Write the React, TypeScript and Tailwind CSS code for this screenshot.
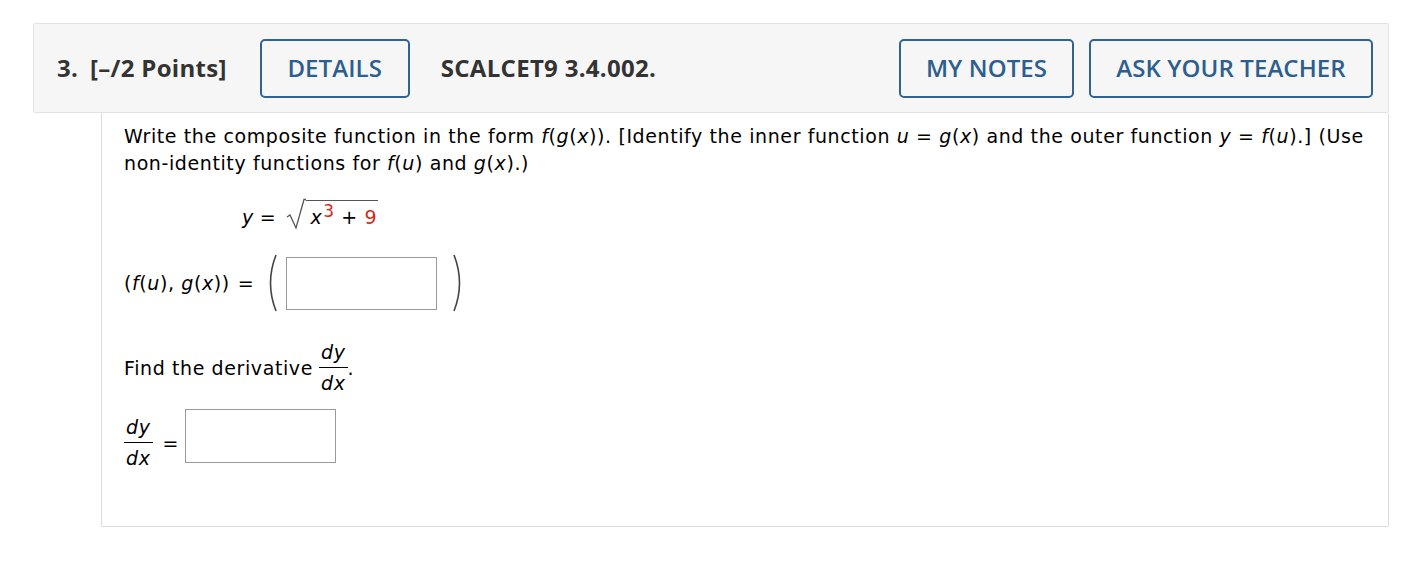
import React from 'react'

const body = { fontFamily: '"DejaVu Sans", Verdana, sans-serif' }
const head = { fontFamily: '"Open Sans", "Liberation Sans", sans-serif' }

function V({ children }: { children: React.ReactNode }) {
  return <i className="italic">{children}</i>
}

function Frac({ top, bottom }: { top: React.ReactNode; bottom: React.ReactNode }) {
  return (
    <span className="inline-flex flex-col items-center align-middle leading-[27px]">
      <span className="px-[2px] pb-[1px]">{top}</span>
      <span className="border-t-[1.5px] border-black w-full text-center px-[2px] pt-[2px]">{bottom}</span>
    </span>
  )
}

function HeadButton({ label, width }: { label: string; width: string }) {
  return (
    <button
      className={`h-[59px] ${width} rounded-[5px] border-2 border-[#2f6394] text-[#2c5e8f] text-[24px] font-semibold tracking-[0.1px] bg-transparent`}
      style={head}
    >
      {label}
    </button>
  )
}

export default function App() {
  return (
    <div className="w-[1408px] h-[572px] bg-white">
      <div className="pt-[23px] pl-[33px] pr-[19px]">
        <div className="flex items-center h-[90px] bg-[#f6f6f6] border border-[#e2e2e2] rounded-[2px] pl-[23px] pr-[15px]" style={head}>
          <span className="text-[24px] font-bold text-[#333] tracking-[0.2px]">3.</span>
          <span className="ml-[12px] text-[24px] font-bold text-[#333] tracking-[0.3px]">[–/2 Points]</span>
          <div className="ml-[33px]">
            <HeadButton label="DETAILS" width="w-[150px]" />
          </div>
          <span className="ml-[31px] text-[24px] font-bold text-[#333] tracking-[0.3px]">SCALCET9 3.4.002.</span>
          <div className="ml-auto flex gap-[15px]">
            <HeadButton label="MY NOTES" width="w-[175px]" />
            <HeadButton label="ASK YOUR TEACHER" width="w-[284px]" />
          </div>
        </div>
        <div className="ml-[68px] h-[414px] border border-t-0 border-[#dcdcdc] rounded-b-[2px] pl-[22px] pr-[10px] pt-[10px] text-[19px] tracking-[0.6px] text-black" style={body}>
          <p className="leading-[27px]">
            <span className="whitespace-nowrap">
              Write the composite function in the form <V>f</V>(<V>g</V>(<V>x</V>)). [Identify the inner function <V>u</V> = <V>g</V>(<V>x</V>) and the outer function <V>y</V> = <V>f</V>(<V>u</V>).] (Use
            </span>
            <br />
            non-identity functions for <V>f</V>(<V>u</V>) and <V>g</V>(<V>x</V>).)
          </p>

          <div className="mt-[14px] ml-[118px] flex items-end h-[40px]">
            <span className="leading-[28px]"><V>y</V></span>
            <span className="ml-[6px] leading-[28px]">=</span>
            <span className="ml-[10px] flex items-end">
              <svg width="20" height="32" viewBox="0 0 20 32" className="mb-[1px]">
                <path d="M1 19 L4 17 L10 30 L18 1.5 L20 1.5" fill="none" stroke="#555" strokeWidth="1.3" />
              </svg>
              <span className="border-t-[1.3px] border-[#555] pl-[4px] pr-[1px] pt-[2px] leading-[28px]">
                <V>x</V>
                <sup className="text-[#d22b20] text-[17px] top-[-7px] ml-[1px]">3</sup>
                <span> + </span>
                <span className="text-[#d22b20]">9</span>
              </span>
            </span>
          </div>

          <div className="mt-[20px] flex items-center h-[64px]">
            <span>
              (<V>f</V>(<V>u</V>), <V>g</V>(<V>x</V>))
            </span>
            <span className="ml-[8px]">=</span>
            <svg width="14" height="58" viewBox="0 0 14 58" className="ml-[10px]">
              <path d="M12 1 Q1 29 12 57" fill="none" stroke="#444" strokeWidth="1.6" />
            </svg>
            <input className="ml-[8px] w-[151px] h-[53px] border border-[#9a9a9a] bg-white outline-none" />
            <svg width="14" height="58" viewBox="0 0 14 58" className="ml-[15px]">
              <path d="M2 1 Q13 29 2 57" fill="none" stroke="#444" strokeWidth="1.6" />
            </svg>
          </div>

          <div className="mt-[24px] flex items-center">
            <span>Find the derivative</span>
            <span className="ml-[6px]">
              <Frac top={<V>dy</V>} bottom={<V>dx</V>} />
            </span>
            <span>.</span>
          </div>

          <div className="mt-[12px] flex items-start">
            <span className="mt-[5px]">
              <Frac top={<V>dy</V>} bottom={<V>dx</V>} />
            </span>
            <span className="ml-[10px] mt-[21px] leading-[27px]">=</span>
            <input className="ml-[6px] w-[151px] h-[54px] border border-[#9a9a9a] bg-white outline-none" />
          </div>
        </div>
      </div>
    </div>
  )
}
